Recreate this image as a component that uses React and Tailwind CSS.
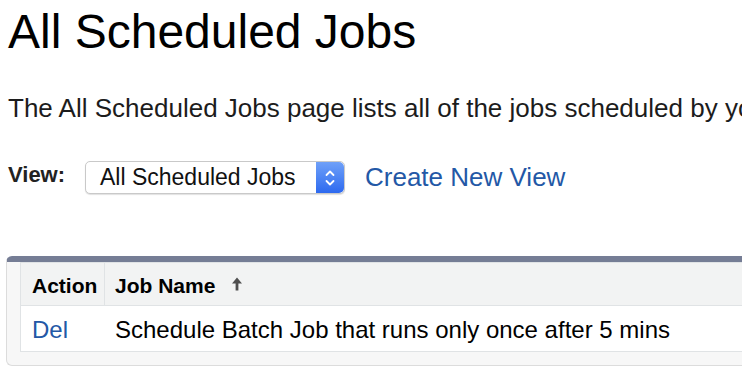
import React from 'react';

const SortUpArrow = () => (
  <svg width="12" height="14" viewBox="0 0 12 14" className="ml-[16px] mt-[2px]">
    <path d="M6 0.5 L11 6.5 L7.4 6.5 L7.4 13.5 L4.6 13.5 L4.6 6.5 L1 6.5 Z" fill="#4f4f4f" />
  </svg>
);

const Stepper = () => (
  <div className="flex h-full w-[28px] flex-col items-center justify-center rounded-r-[5px] bg-gradient-to-b from-[#6fa0f8] to-[#2d69ef]">
    <svg width="12" height="20" viewBox="0 0 12 20" fill="none" stroke="#ffffff" strokeWidth="1.8" strokeLinecap="round" strokeLinejoin="round">
      <path d="M2.5 7 L6 3.5 L9.5 7" />
      <path d="M2.5 13 L6 16.5 L9.5 13" />
    </svg>
  </div>
);

const App = () => {
  return (
    <div className="h-[390px] w-[742px] overflow-hidden bg-white font-['Liberation_Sans',Arial,sans-serif] text-black">
      <h1 className="pl-[8px] pt-[8px] text-[48px] font-normal leading-[48px]">All Scheduled Jobs</h1>

      <p className="mt-[37px] whitespace-nowrap pl-[8px] text-[26px] leading-[30px] text-[#1c1c1c]">
        The All Scheduled Jobs page lists all of the jobs scheduled by your organization.
      </p>

      {/* View picker */}
      <div className="mt-[38px] flex items-start pl-[8px]">
        <span className="mt-[3px] w-[77px] text-[22px] font-bold leading-[22px] text-[#222]">View:</span>
        <div className="flex h-[33px] w-[260px] items-center justify-between rounded-[5px] border border-[#c9c9c9] bg-white shadow-[0_1px_1px_rgba(0,0,0,0.12)]">
          <span className="pl-[14px] text-[23px] leading-[23px] text-[#111]">All Scheduled Jobs</span>
          <Stepper />
        </div>
        <a className="ml-[20px] mt-[3px] text-[26px] leading-[26px] text-[#2358a6]">Create New View</a>
      </div>

      {/* Jobs list */}
      <div className="ml-[6px] mt-[62px] w-[760px] rounded-tl-[6px] rounded-bl-[6px] border-t-[6px] border-b border-l border-t-[#757d95] border-b-[#dcdcdc] border-l-[#dcdcdc] bg-[#f7f7f7] pb-[13px] pl-[13px]">
        <div className="border border-[#e0e3e5] bg-white">
          <div className="flex h-[43px] border-b border-[#e0e3e5] bg-[#f2f3f3]">
            <div className="w-[84px] border-r border-[#e0e3e5] pl-[11px] pt-[12px] text-[21px] font-bold leading-[21px]">Action</div>
            <div className="flex items-start pl-[10px] pt-[12px]">
              <span className="text-[21px] font-bold leading-[21px]">Job Name</span>
              <SortUpArrow />
            </div>
          </div>
          <div className="flex h-[45px]">
            <div className="w-[84px] pl-[11px] pt-[12px] text-[24px] leading-[24px] text-[#2358a6]">Del</div>
            <div className="pl-[10px] pt-[12px] text-[24px] leading-[24px]">Schedule Batch Job that runs only once after 5 mins</div>
          </div>
        </div>
      </div>
    </div>
  );
};

export default App;
